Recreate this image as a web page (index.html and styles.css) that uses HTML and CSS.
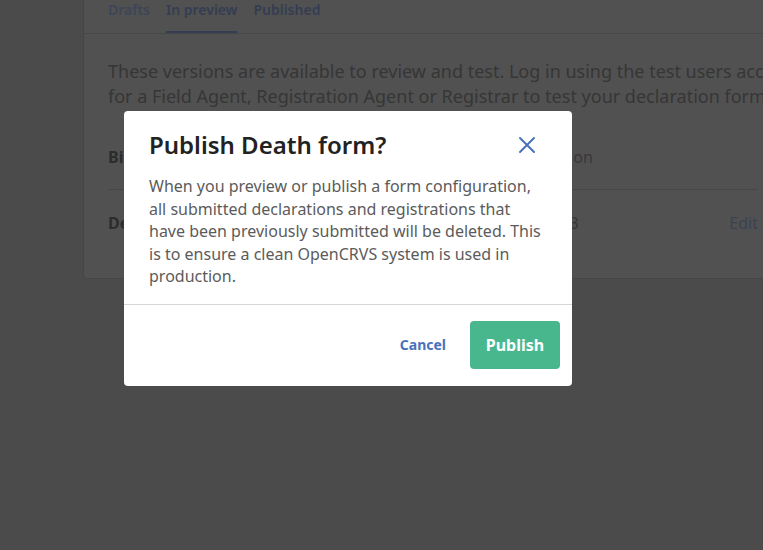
FILE: index.html
```html
<!DOCTYPE html>
<html lang="en">
<head>
<meta charset="utf-8">
<title>Publish Death form?</title>
<link rel="stylesheet" href="styles.css">
</head>
<body>
<div class="page">
  <section class="card">
    <nav class="tabs">
      <span class="tab">Drafts</span>
      <span class="tab active">In preview</span>
      <span class="tab">Published</span>
    </nav>
    <div class="card-body">
      <p class="intro">These versions are available to review and test. Log in using the test users accounts for a Field Agent, Registration Agent or Registrar to test your declaration form.</p>
      <div class="row">
        <span class="name">Birth</span>
        <span class="meta">Publication</span>
        <span class="action"></span>
      </div>
      <div class="row">
        <span class="name">Death</span>
        <span class="meta">Version 3</span>
        <span class="action">Edit</span>
      </div>
    </div>
  </section>
</div>

<div class="modal" role="dialog" aria-labelledby="modal-title">
  <div class="modal-head">
    <h2 id="modal-title" class="modal-title">Publish Death form?</h2>
    <button class="close" aria-label="Close">
      <svg width="18" height="18" viewBox="0 0 18 18" aria-hidden="true"><path d="M2 2 L16 16 M16 2 L2 16" stroke="#4972bb" stroke-width="2" stroke-linecap="round" fill="none"/></svg>
    </button>
  </div>
  <p class="modal-text">When you preview or publish a form configuration, all submitted declarations and registrations that have been previously submitted will be deleted. This is to ensure a clean OpenCRVS system is used in production.</p>
  <div class="modal-foot">
    <button class="btn-cancel">Cancel</button>
    <button class="btn-publish">Publish</button>
  </div>
</div>
</body>
</html>
```

FILE: styles.css
```css
html, body {
  margin: 0;
  padding: 0;
}
body {
  width: 763px;
  height: 550px;
  overflow: hidden;
  background: #4b4b4b;
  font-family: "Noto Sans", "Open Sans", sans-serif;
  position: relative;
}
.page {
  padding-left: 83px;
  margin-top: -5px;
}
.card {
  width: 700px;
  background: #515151;
  border: 1px solid #464646;
  border-radius: 4px;
  box-sizing: border-box;
}
.tabs {
  display: flex;
  gap: 16px;
  padding: 0 24px;
  height: 37px;
  border-bottom: 1px solid #474747;
}
.tab {
  font-size: 14px;
  font-weight: 600;
  color: #343d53;
  line-height: 28px;
  height: 37px;
  box-sizing: border-box;
  border-bottom: 2px solid transparent;
}
.tab:first-child {
  color: #3d4558;
}
.tab.active {
  border-bottom-color: #343d53;
}
.card-body {
  padding: 25px 24px 23px 24px;
}
.intro {
  margin: 0;
  width: 705px;
  font-size: 18px;
  line-height: 25px;
  color: #363636;
}
.row {
  display: grid;
  grid-template-columns: 401px 1fr auto;
  align-items: center;
  height: 65px;
  font-size: 16px;
  color: #363636;
}
.row + .row {
  border-top: 1px solid #474747;
}
.row:first-of-type {
  margin-top: 15px;
}
.name {
  font-weight: 700;
  color: #2c2c2c;
}
.meta {
  color: #383838;
}
.action {
  color: #3b4253;
  text-align: right;
}

.modal {
  position: absolute;
  left: 124px;
  top: 111px;
  width: 448px;
  background: #ffffff;
  border-radius: 4px;
  box-sizing: border-box;
}
.modal-head {
  display: flex;
  align-items: center;
  justify-content: space-between;
  padding: 18px 36px 0 25px;
}
.modal-title {
  margin: 0;
  font-size: 24px;
  font-weight: 600;
  color: #222222;
  line-height: 32px;
}
.close {
  border: 0;
  background: none;
  padding: 0;
  width: 18px;
  height: 18px;
  display: flex;
}
.modal-text {
  margin: 14px 0 0;
  padding: 0 25px 16px;
  font-size: 16px;
  line-height: 22.5px;
  color: #5b5b5b;
  border-bottom: 1px solid #d6d6d6;
}
.modal-foot {
  display: flex;
  justify-content: flex-end;
  align-items: center;
  gap: 24px;
  padding: 16px 12px 17px 25px;
}
.btn-cancel {
  border: 0;
  background: none;
  font-family: inherit;
  font-size: 14px;
  font-weight: 700;
  color: #4972bb;
  padding: 0;
}
.btn-publish {
  border: 0;
  font-family: inherit;
  font-size: 16px;
  font-weight: 700;
  color: #ffffff;
  background: #49b78d;
  border-radius: 4px;
  width: 90px;
  height: 48px;
  padding: 0;
}
```
